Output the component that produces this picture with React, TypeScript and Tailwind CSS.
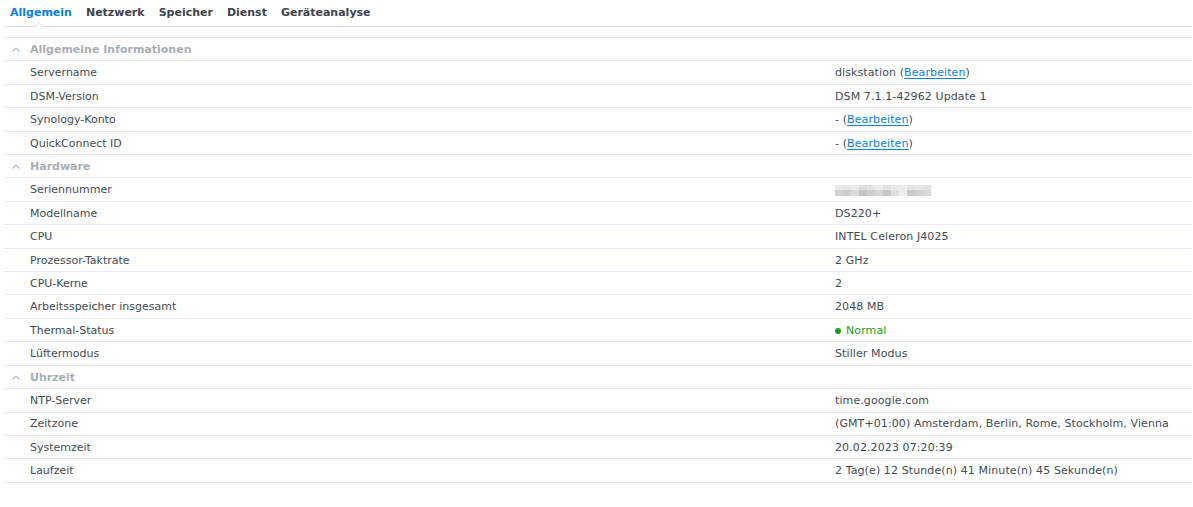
import { Fragment } from 'react';

type Row = { label: string; value: React.ReactNode };
type Section = { title: string; rows: Row[] };

const Link = ({ children }: { children: React.ReactNode }) => (
  <span className="text-[#0a7fe0] underline underline-offset-2">{children}</span>
);

const Edit = ({ prefix }: { prefix: string }) => (
  <span>
    {prefix} (<Link>Bearbeiten</Link>)
  </span>
);

// pixelated serial number
const blurTop = ['#e8e8e8', '#e6e6e6', '#ececec', '#dcdcdc', '#e4e4e4', '#eaeaea', '#e2e2e2', '#e9e9e9', '#ededed', '#e5e5e5', '#e7e7e7', '#e3e3e3'];
const blurBottom = ['#d3d3d3', '#cdcdcd', '#d9d9d9', '#c3c3c3', '#cfcfcf', '#d6d6d6', '#c8c8c8', '#dedede', '#eeeeee', '#cbcbcb', '#d2d2d2', '#d8d8d8'];

function Blurred() {
  return (
    <div className="flex flex-col">
      <div className="flex">
        {blurTop.map((c, i) => (
          <div key={i} className="w-[8px] h-[5px]" style={{ background: c }} />
        ))}
      </div>
      <div className="flex">
        {blurBottom.map((c, i) => (
          <div key={i} className="w-[8px] h-[6px]" style={{ background: c }} />
        ))}
      </div>
    </div>
  );
}

const sections: Section[] = [
  {
    title: 'Allgemeine Informationen',
    rows: [
      { label: 'Servername', value: <Edit prefix="diskstation" /> },
      { label: 'DSM-Version', value: 'DSM 7.1.1-42962 Update 1' },
      { label: 'Synology-Konto', value: <Edit prefix="-" /> },
      { label: 'QuickConnect ID', value: <Edit prefix="-" /> },
    ],
  },
  {
    title: 'Hardware',
    rows: [
      { label: 'Seriennummer', value: <Blurred /> },
      { label: 'Modellname', value: 'DS220+' },
      { label: 'CPU', value: 'INTEL Celeron J4025' },
      { label: 'Prozessor-Taktrate', value: '2 GHz' },
      { label: 'CPU-Kerne', value: '2' },
      { label: 'Arbeitsspeicher insgesamt', value: '2048 MB' },
      {
        label: 'Thermal-Status',
        value: (
          <span className="flex items-center gap-[5px] text-[#1a9e1a]">
            <span className="w-[6px] h-[6px] rounded-full bg-[#12a012]" />
            Normal
          </span>
        ),
      },
      { label: 'Lüftermodus', value: 'Stiller Modus' },
    ],
  },
  {
    title: 'Uhrzeit',
    rows: [
      { label: 'NTP-Server', value: 'time.google.com' },
      { label: 'Zeitzone', value: '(GMT+01:00) Amsterdam, Berlin, Rome, Stockholm, Vienna' },
      { label: 'Systemzeit', value: '20.02.2023 07:20:39' },
      { label: 'Laufzeit', value: '2 Tag(e) 12 Stunde(n) 41 Minute(n) 45 Sekunde(n)' },
    ],
  },
];

const tabs = ['Allgemein', 'Netzwerk', 'Speicher', 'Dienst', 'Geräteanalyse'];

export default function App() {
  return (
    <div className="w-[1193px] h-[507px] bg-white text-[11px] text-[#414b55] font-['DejaVu_Sans',Verdana,sans-serif]">
      {/* tab bar */}
      <div className="ml-[4px] mr-[1px] h-[27px] border-b border-[#d5e0ea] flex items-center gap-[14px] pl-[6px] relative">
        {tabs.map((t, i) => (
          <span
            key={t}
            className={i === 0 ? 'font-bold text-[#057feb]' : 'font-bold text-[#3b434c]'}
          >
            {t}
          </span>
        ))}
        {/* active tab notch */}
        <div className="absolute left-[30px] bottom-[-1px] w-0 h-0 border-l-[5px] border-r-[5px] border-b-[5px] border-l-transparent border-r-transparent border-b-[#d5e0ea]" />
        <div className="absolute left-[31px] bottom-[-1px] w-0 h-0 border-l-[4px] border-r-[4px] border-b-[4px] border-l-transparent border-r-transparent border-b-white" />
      </div>

      <div className="ml-[4px] mr-[1px] mt-[10px] border-t border-[#e4ebf2]">
        {sections.map((s) => (
          <Fragment key={s.title}>
            <div className="h-[23.42px] border-b border-[#e4ebf2] flex items-center pt-[2px]">
              <svg width="26" height="10" viewBox="0 0 26 10" className="shrink-0">
                <polyline points="8.5,6.5 12,3 15.5,6.5" fill="none" stroke="#b4b9be" strokeWidth="1.2" />
              </svg>
              <span className="font-bold text-[#a9aeb3]">{s.title}</span>
            </div>
            {s.rows.map((r) => (
              <div key={r.label} className="h-[23.42px] border-b border-[#e4ebf2] flex items-center pt-[2px]">
                <div className="w-[831px] pl-[26px] shrink-0">{r.label}</div>
                <div className="tracking-[0.1px]">{r.value}</div>
              </div>
            ))}
          </Fragment>
        ))}
      </div>
    </div>
  );
}
